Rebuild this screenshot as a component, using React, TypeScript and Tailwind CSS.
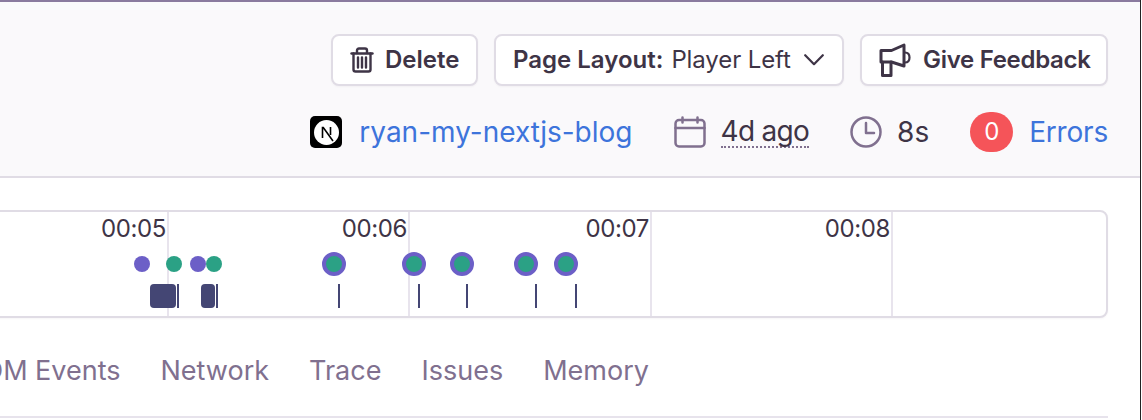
const GRID_LINES = [167, 408, 650, 891];
const LABELS = ["00:05", "00:06", "00:07", "00:08"];
const TABS = ["DOM Events", "Network", "Trace", "Issues", "Memory"];

// x centre of every dot row marker, in page coordinates
const PLAIN_DOTS = [
  { x: 142, color: "bg-[#6c5fc7]" },
  { x: 174, color: "bg-[#2ba185]" },
  { x: 198, color: "bg-[#6c5fc7]" },
  { x: 214, color: "bg-[#2ba185]" },
];
const RING_DOTS = [334, 414, 462, 526, 566];
const BLOCKS = [
  { x: 150, w: 26 },
  { x: 177, w: 2 },
  { x: 201, w: 14 },
  { x: 216, w: 2 },
  { x: 338, w: 2 },
  { x: 418, w: 2 },
  { x: 466, w: 2 },
  { x: 535, w: 2 },
  { x: 575, w: 2 },
];

// the card starts left of the page, this turns page x into card x
const CARD_X = 20;

function TrashIcon() {
  return (
    <svg width="24" height="26" viewBox="0 0 24 26" fill="none" stroke="#3e3446" strokeWidth="2.4" strokeLinecap="round" strokeLinejoin="round">
      <path d="M1.5 6.5h21" />
      <path d="M7 6V3.5c0-1 .8-2 2-2h6c1.2 0 2 1 2 2V6" />
      <path d="M3.5 6.5v16c0 1.2.8 2 2 2h13c1.2 0 2-.8 2-2v-16" />
      <path d="M8 10.5v10M12 10.5v10M16 10.5v10" />
    </svg>
  );
}

function MegaphoneIcon() {
  return (
    <svg width="32" height="34" viewBox="0 0 32 34" fill="none" stroke="#3e3446" strokeWidth="3" strokeLinejoin="round" strokeLinecap="round">
      <path d="M2 7.500h10.500L25 2v21l-12.500-4H2z" />
      <path d="M26 9.500c3 0 4.500 2.200 4.500 5s-1.500 5-4.500 5" strokeWidth="2.200" />
      <path d="M3.500 19v13.500h8.500V19" />
    </svg>
  );
}

function CalendarIcon() {
  return (
    <svg width="32" height="32" viewBox="0 0 32 32" fill="none" stroke="#80708f" strokeWidth="2.500" strokeLinecap="round" strokeLinejoin="round">
      <rect x="1.500" y="4" width="29" height="26.500" rx="3.500" />
      <path d="M1.500 12h29M8.500 1.500v5M23.500 1.500v5" />
    </svg>
  );
}

function ClockIcon() {
  return (
    <svg width="32" height="32" viewBox="0 0 32 32" fill="none" stroke="#80708f" strokeWidth="2.500" strokeLinecap="round" strokeLinejoin="round">
      <circle cx="16" cy="16" r="14.500" />
      <path d="M16 7v10h8" />
    </svg>
  );
}

function ChevronIcon() {
  return (
    <svg width="20" height="12" viewBox="0 0 20 12" fill="none" stroke="#3e3446" strokeWidth="2.200" strokeLinecap="round" strokeLinejoin="round">
      <path d="M1.200 1.200L10 10.200l8.800-9" />
    </svg>
  );
}

function NextLogo() {
  return (
    <div className="flex h-8 w-8 items-center justify-center rounded-[5px] bg-black">
      <svg width="25" height="25" viewBox="0 0 25 25">
        <circle cx="12.500" cy="12.500" r="12.500" fill="#fff" />
        <path d="M8.500 18V7.500h.8L19 21" fill="none" stroke="#000" strokeWidth="1.600" />
        <path d="M16.500 7v8" fill="none" stroke="#000" strokeWidth="1.600" />
      </svg>
    </div>
  );
}

function Button({ children, className }: { children: React.ReactNode; className: string }) {
  return (
    <button className={`flex h-[52px] items-center whitespace-nowrap rounded-[8px] border-2 border-[#e0dce5] bg-white pl-[17px] text-[24px] font-semibold text-[#3e3446] shadow-[0_1px_2px_rgba(43,34,51,0.04)] ${className}`}>
      {children}
    </button>
  );
}

export default function App() {
  return (
    <div className="h-[420px] w-[1142px] overflow-hidden bg-white font-['Inter','Noto_Sans',sans-serif] text-[#3e3446]">
      <div className="h-full w-[1141px] overflow-hidden border-r border-[#222]">
        <div className="flex h-[178px] flex-col items-end border-t-2 border-b-2 border-t-[#8a7a9e] border-b-[#e0dce5] bg-[#faf9fb] pt-[32px] pr-[32px]">
          <div className="flex gap-4">
            <Button className="w-[147px] gap-[11px]">
              <TrashIcon />
              Delete
            </Button>
            <Button className="w-[350px]">
              <span>Page Layout:</span>
              <span className="ml-[8px] font-normal tracking-[-0.1px]">Player Left</span>
              <span className="ml-[13px]"><ChevronIcon /></span>
            </Button>
            <Button className="w-[248px] gap-[12px] tracking-[-0.3px]">
              <MegaphoneIcon />
              Give Feedback
            </Button>
          </div>
          <div className="mt-[26px] flex h-[40px] items-center whitespace-nowrap text-[28px]">
            <NextLogo />
            <span className="ml-[17px] text-[#3d74db]">ryan-my-nextjs-blog</span>
            <span className="ml-[41px]"><CalendarIcon /></span>
            <span className="ml-[15px] border-b-2 border-dotted border-[#80708f] leading-[30px] tracking-[-0.7px]">4d ago</span>
            <span className="ml-[41px]"><ClockIcon /></span>
            <span className="ml-[15px]">8s</span>
            <span className="ml-[41px] flex h-[40px] w-[43px] items-center justify-center rounded-full bg-[#f55459] text-[24px] text-white">0</span>
            <span className="ml-[16px] tracking-[-0.2px] text-[#3d74db]">Errors</span>
          </div>
        </div>

        <div className="flex justify-end pt-[32px] pr-[32px]">
          <div className="relative h-[108px] w-[1130px] shrink-0 overflow-hidden rounded-[8px] border-2 border-[#e0dce5] bg-white shadow-[0_1px_2px_rgba(43,34,51,0.04)]">
            {GRID_LINES.map((x, i) => (
              <div key={x} className="absolute top-0 bottom-0 w-[2px] bg-[#e8e4ed]" style={{ left: x + CARD_X }}>
                <span className="absolute top-[2px] right-[3px] text-[24px] leading-[30px] tracking-[-0.4px] text-[#3e3446]">{LABELS[i]}</span>
              </div>
            ))}
            {PLAIN_DOTS.map((d) => (
              <div key={d.x} className={`absolute top-[44px] h-4 w-4 rounded-full ${d.color}`} style={{ left: d.x + CARD_X - 8 }} />
            ))}
            {RING_DOTS.map((x) => (
              <div key={x} className="absolute top-[40px] h-6 w-6 rounded-full border-[4px] border-[#6c5fc7] bg-[#2ba185]" style={{ left: x + CARD_X - 12 }} />
            ))}
            {BLOCKS.map((b) => (
              <div
                key={b.x}
                className={`absolute top-[72px] h-6 bg-[#444674] ${b.w > 2 ? "rounded-[4px]" : ""}`}
                style={{ left: b.x + CARD_X, width: b.w }}
              />
            ))}
          </div>
        </div>

        <div className="mt-[32px] mr-[32px] flex h-[68px] gap-[40px] whitespace-nowrap border-b-2 border-[#e7e3ec] pt-[1px] text-[27px] leading-[40px] text-[#80708f]">
          {TABS.map((t, i) => (
            <span key={t} className={i === 0 ? "-ml-[37px]" : ""}>{t}</span>
          ))}
        </div>
      </div>
    </div>
  );
}
